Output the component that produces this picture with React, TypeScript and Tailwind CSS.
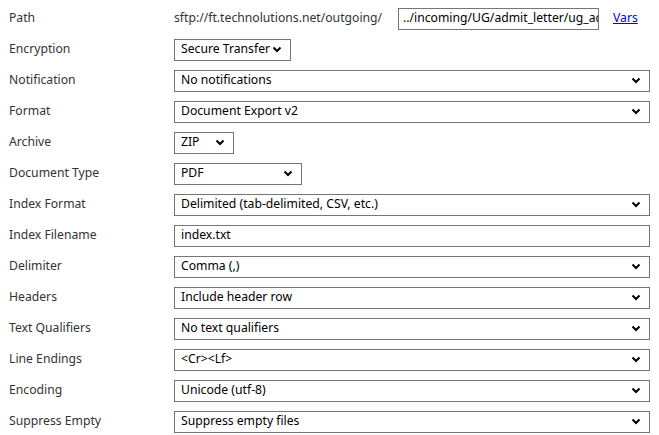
const Chev = () => (
  <svg width="10" height="7" viewBox="0 0 10 7" className="shrink-0">
    <path d="M1.5 1.5 L5 5 L8.5 1.5" fill="none" stroke="#000" strokeWidth="2" />
  </svg>
);

function Sel({ text, w }: { text: string; w?: string }) {
  return (
    <div className={`h-[22px] border border-[#767676] bg-white flex items-center justify-between pl-[6px] pr-[8px] text-black ${w ?? "w-[476px]"}`}>
      <span className="whitespace-nowrap">{text}</span>
      <Chev />
    </div>
  );
}

const rows: [string, string, string?][] = [
  ["Encryption", "Secure Transfer", "w-[117px]"],
  ["Notification", "No notifications"],
  ["Format", "Document Export v2"],
  ["Archive", "ZIP", "w-[60px]"],
  ["Document Type", "PDF", "w-[128px]"],
  ["Index Format", "Delimited (tab-delimited, CSV, etc.)"],
  ["Index Filename", ""],
  ["Delimiter", "Comma (,)"],
  ["Headers", "Include header row"],
  ["Text Qualifiers", "No text qualifiers"],
  ["Line Endings", "<Cr><Lf>"],
  ["Encoding", "Unicode (utf-8)"],
  ["Suppress Empty", "Suppress empty files"],
];

export default function App() {
  return (
    <div className="w-[659px] h-[435px] bg-white overflow-hidden pt-[3px] text-[12.2px] text-[#333]" style={{ fontFamily: '"Noto Sans", sans-serif' }}>
      <div className="h-[31px] flex items-center">
        <div className="w-[174px] pl-[9px] shrink-0">Path</div>
        <span className="w-[224px] shrink-0 whitespace-nowrap">sftp://ft.technolutions.net/outgoing/</span>
        <div className="w-[201px] shrink-0 h-[22px] border border-[#767676] flex items-center pl-[4px] overflow-hidden text-black whitespace-nowrap">../incoming/UG/admit_letter/ug_admit</div>
        <a className="ml-[14px] text-[#0000ee] underline">Vars</a>
      </div>
      {rows.map(([label, val, w]) => (
        <div key={label} className="h-[31px] flex items-center">
          <div className="w-[174px] pl-[9px] shrink-0">{label}</div>
          {label === "Index Filename" ? (
            <div className="w-[476px] h-[22px] border border-[#767676] flex items-center pl-[6px] text-black">index.txt</div>
          ) : (
            <Sel text={val} w={w} />
          )}
        </div>
      ))}
    </div>
  );
}
